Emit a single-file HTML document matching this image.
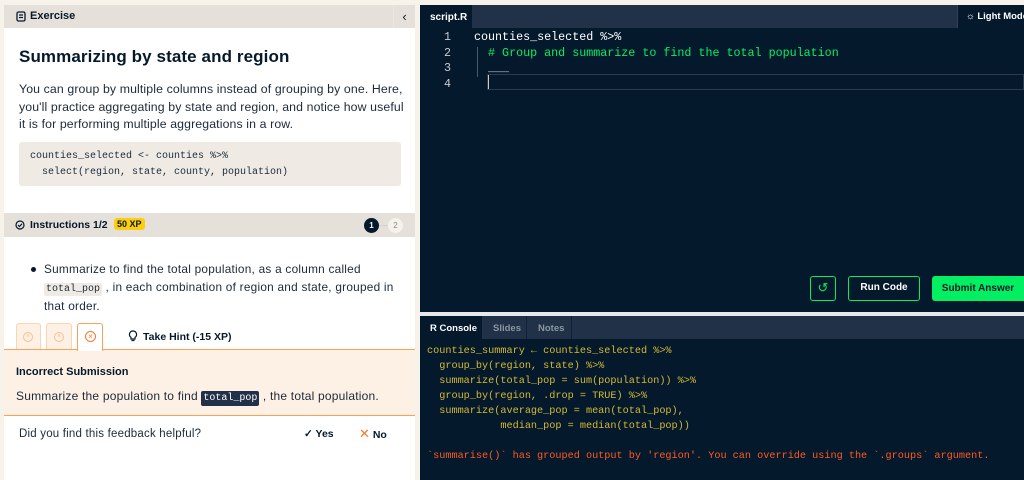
<!DOCTYPE html>
<html><head><style>
*{margin:0;padding:0;box-sizing:border-box}
body{width:1024px;height:480px;background:#f7f3eb;font-family:"Liberation Sans",sans-serif;position:relative;overflow:hidden;color:#05192d}
.abs{position:absolute}
.mono{font-family:"Liberation Mono","DejaVu Sans Mono",monospace}
#left{left:4px;top:5px;width:411px;height:475px;background:#fff}
.bar{background:#e5e1da;font-size:11px;font-weight:bold}
#right{left:420px;top:5px;width:604px;height:475px;background:#05192d}
.code{font-size:11.5px;line-height:15px;color:#d4b934;white-space:pre}
</style></head><body>
<div id="left" class="abs">
 <div class="abs bar" style="left:0;top:0;width:411px;height:23px;">
  <svg class="abs" style="left:12px;top:6px" width="11" height="11" viewBox="0 0 11 11"><rect x="1" y="1" width="8" height="9" rx="1.5" fill="none" stroke="#05192d" stroke-width="1.3"/><path d="M3 4h4M3 6.5h4" stroke="#05192d" stroke-width="1.2"/></svg>
  <span class="abs" style="left:26px;top:5px">Exercise</span>
  <div class="abs" style="left:389px;top:0;width:22px;height:23px;border-left:1px solid #ebe7e0;text-align:center;line-height:23px;font-size:13px;background:#e5e1da;font-weight:normal">‹</div>
 </div>
 <div class="abs" style="left:15px;top:42px;font-size:17px;font-weight:bold;letter-spacing:0.1px">Summarizing by state and region</div>
 <div class="abs" style="left:15px;top:76px;width:392px;font-size:12.3px;line-height:17.5px;color:#1c2a3a;letter-spacing:0.12px">You can group by multiple columns instead of grouping by one. Here, you'll practice aggregating by state and region, and notice how useful it is for performing multiple aggregations in a row.</div>
 <div class="abs mono" style="left:15px;top:137px;width:382px;height:44px;background:#efebe4;border-radius:3px;font-size:10px;line-height:15.5px;padding:7px 11px;white-space:pre;color:#1c2a3a">counties_selected &lt;- counties %&gt;%
  select(region, state, county, population)</div>
 <div class="abs bar" style="left:0;top:208px;width:411px;height:24px;">
  <svg class="abs" style="left:11px;top:7px" width="10" height="10" viewBox="0 0 10 10"><circle cx="5" cy="5" r="4" fill="none" stroke="#05192d" stroke-width="1.2"/><path d="M3 5l1.5 1.5L7 3.8" fill="none" stroke="#05192d" stroke-width="1.2"/></svg>
  <span class="abs" style="left:26px;top:6px;font-size:10.5px">Instructions 1/2</span>
  <span class="abs" style="left:110px;top:5px;background:#fcce0d;border-radius:3px;padding:1px 3px;font-size:9px">50 XP</span>
  <div class="abs" style="left:360px;top:5px;width:15px;height:15px;border-radius:50%;background:#05192d;color:#fff;font-size:8px;text-align:center;line-height:15px">1</div>
  <div class="abs" style="left:375px;top:12px;width:10px;height:1px;background:#d5d1ca"></div>
  <div class="abs" style="left:384px;top:5px;width:15px;height:15px;border-radius:50%;background:#f5f2ed;color:#888;font-size:8px;text-align:center;line-height:15px;font-weight:normal">2</div>
 </div>
 <div class="abs" style="left:27px;top:262px;width:5px;height:5px;border-radius:50%;background:#05192d"></div>
 <div class="abs" style="left:40px;top:256px;width:358px;font-size:11.8px;line-height:17.5px;color:#1c2a3a;letter-spacing:0.25px">Summarize to find the total population, as a column called <span class="mono" style="background:#efebe4;font-size:10px;padding:1px 2px;border-radius:2px;letter-spacing:0">total_pop</span> , in each combination of region and state, grouped in that order.</div>
 <div class="abs" style="left:12px;top:318px;width:25px;height:27px;border:1px solid #fbd4b0;border-bottom:none;border-radius:3px 3px 0 0;background:#fdf1e5"></div>
 <div class="abs" style="left:42px;top:318px;width:26px;height:27px;border:1px solid #fbd4b0;border-bottom:none;border-radius:3px 3px 0 0;background:#fdf1e5"></div>
 <div class="abs" style="left:73px;top:318px;width:26px;height:28px;border:1px solid #fba257;border-bottom:none;border-radius:3px 3px 0 0;background:#fff;z-index:2"></div>
 <div class="abs" style="left:19px;top:327px;width:10px;height:10px;border:1px solid #fbc08f;border-radius:50%;font-size:7px;line-height:8px;text-align:center;color:#fbc08f">×</div>
 <div class="abs" style="left:50px;top:327px;width:10px;height:10px;border:1px solid #fbc08f;border-radius:50%;font-size:7px;line-height:8px;text-align:center;color:#fbc08f">×</div>
 <div class="abs" style="left:81px;top:326px;width:11px;height:11px;border:1.3px solid #f7772c;border-radius:50%;font-size:8px;line-height:9px;text-align:center;color:#f7772c;z-index:3">×</div>
 <svg class="abs" style="left:124px;top:325px" width="10" height="12" viewBox="0 0 10 12"><path d="M5 1a3.5 3.5 0 0 0-2 6.4V9h4V7.4A3.5 3.5 0 0 0 5 1zM3.5 10.5h3" fill="none" stroke="#05192d" stroke-width="1.2"/></svg>
 <span class="abs" style="left:139px;top:326px;font-size:10.5px;font-weight:bold">Take Hint (-15 XP)</span>
 <div class="abs" style="left:0;top:344px;width:411px;height:67px;background:#fdf1e5;border-top:1px solid #fba257;border-bottom:1px solid #fba257"></div>
 <div class="abs" style="left:12px;top:361px;font-size:11px;font-weight:bold">Incorrect Submission</div>
 <div class="abs" style="left:12px;top:384px;font-size:12px;color:#1c2a3a;letter-spacing:0.2px">Summarize the population to find <span class="mono" style="background:#213147;color:#fff;font-size:10px;padding:2px 2px;border-radius:2px;letter-spacing:0">total_pop</span> , the total population.</div>
 <div class="abs" style="left:15px;top:423px;font-size:11.5px;color:#1c2a3a;letter-spacing:0.2px">Did you find this feedback helpful?</div>
 <div class="abs" style="left:300px;top:423px;font-size:10.5px;font-weight:bold">✓ Yes</div>
 <div class="abs" style="left:355px;top:421px;font-size:10.5px;font-weight:bold"><span style="color:#f7772c;font-weight:normal;font-size:13px">✕</span> No</div>
</div>
<div id="right" class="abs">
 <div class="abs" style="left:0;top:0;width:604px;height:23px;background:#213147"></div>
 <div class="abs" style="left:0;top:0;width:52px;height:23px;background:#05192d;color:#fff;font-size:10px;font-weight:bold;padding:7px 0 0 10px">script.R</div>
 <div class="abs" style="left:537px;top:0;width:67px;height:23px;background:#05192d;border-left:1px solid #324257;color:#fff;font-size:9.5px;font-weight:bold;padding:6px 0 0 8px;white-space:nowrap">☼ Light Mode</div>
 <div class="abs mono" style="left:24px;top:25px;font-size:11.7px;line-height:15.5px;color:#c8ccd2;text-align:right;white-space:pre">1
2
3
4</div>
 <div class="abs mono" style="left:54px;top:25px;font-size:11.7px;line-height:15.5px;color:#fff;white-space:pre">counties_selected %&gt;%
<span style="color:#03ef62">  # Group and summarize to find the total population</span>
<span style="color:#c8ccd2">  ___</span></div>
 <div class="abs" style="left:57px;top:42px;width:1px;height:30px;background:#4a5a6b"></div>
 <div class="abs" style="left:67px;top:69px;width:537px;height:16px;border:1px solid #2e3a47"></div>
 <div class="abs" style="left:68px;top:70px;width:1px;height:14px;background:#c8ccd2"></div>
 <div class="abs" style="left:390px;top:271px;width:26px;height:25px;border:1.5px solid #03ef62;border-radius:3px;color:#03ef62;text-align:center;line-height:22px;font-size:13px">↺</div>
 <div class="abs" style="left:428px;top:271px;width:72px;height:25px;border:1.5px solid #03ef62;border-radius:3px;color:#fff;text-align:center;line-height:22px;font-size:10px;font-weight:bold">Run Code</div>
 <div class="abs" style="left:512px;top:271px;width:92px;height:25px;background:#03ef62;border-radius:3px 0 0 3px;color:#05192d;text-align:center;line-height:25px;font-size:10px;font-weight:bold;white-space:nowrap">Submit Answer</div>
 <div class="abs" style="left:0;top:307px;width:604px;height:4px;background:#e8e8e8"></div>
 <div class="abs" style="left:0;top:311px;width:604px;height:23px;background:#213147"></div>
 <div class="abs" style="left:0;top:311px;width:62px;height:23px;background:#05192d;color:#fff;font-size:9.5px;font-weight:bold;padding:7px 0 0 10px">R Console</div>
 <div class="abs" style="left:62px;top:311px;width:45px;height:23px;border-right:1px solid #0f2238;color:#8c96a2;font-size:9.5px;font-weight:bold;padding:7px 0 0 11px">Slides</div>
 <div class="abs" style="left:107px;top:311px;width:45px;height:23px;border-right:1px solid #0f2238;color:#8c96a2;font-size:9.5px;font-weight:bold;padding:7px 0 0 11px">Notes</div>
 <div class="abs mono code" style="left:7px;top:339px;font-size:10.2px">counties_summary ← counties_selected %&gt;%
  group_by(region, state) %&gt;%
  summarize(total_pop = sum(population)) %&gt;%
  group_by(region, .drop = TRUE) %&gt;%
  summarize(average_pop = mean(total_pop),
            median_pop = median(total_pop))

<span style="color:#ff5a1f">`summarise()` has grouped output by 'region'. You can override using the `.groups` argument.</span></div>
</div>
</body></html>
